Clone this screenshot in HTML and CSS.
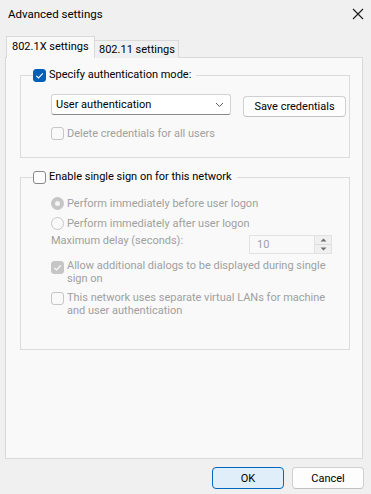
FILE: index.html
```html
<!DOCTYPE html>
<html>
<head>
<meta charset="utf-8">
<link rel="stylesheet" href="styles.css">
</head>
<body>
<div class="window">
  <div class="titlebar">
    <span class="title">Advanced settings</span>
    <svg class="close" width="12" height="12" viewBox="0 0 12 12"><path d="M1 1 L11 11 M11 1 L1 11" stroke="#1a1a1a" stroke-width="1.1" fill="none"/></svg>
  </div>
  <div class="tabs">
    <div class="tab active">802.1X settings</div>
    <div class="tab">802.11 settings</div>
  </div>
  <div class="panel">
    <fieldset class="group g1">
      <legend><span class="cb checked"><svg width="13" height="13" viewBox="0 0 13 13"><path d="M3.3 6.8 L5.5 9 L9.8 4.4" stroke="#fff" stroke-width="1.1" fill="none"/></svg></span><span>Specify authentication mode:</span></legend>
      <div class="auth-row">
        <div class="select"><span>User authentication</span><svg class="chev" width="9" height="6" viewBox="0 0 9 6"><path d="M1 1 L4.5 4.5 L8 1" stroke="#5c5c5c" stroke-width="1" fill="none"/></svg></div>
        <div class="btn save">Save credentials</div>
      </div>
      <div class="opt disabled del"><span class="cb dis"></span><span>Delete credentials for all users</span></div>
    </fieldset>
    <fieldset class="group g2">
      <legend><span class="cb"></span><span>Enable single sign on for this network</span></legend>
      <div class="opt disabled radio-row first"><span class="radio on"></span><span>Perform immediately before user logon</span></div>
      <div class="opt disabled radio-row"><span class="radio"></span><span>Perform immediately after user logon</span></div>
      <div class="delay-row disabled">
        <span class="delay-label">Maximum delay (seconds):</span>
        <div class="spin">
          <span class="spin-val">10</span>
          <div class="spin-btns">
            <div class="spin-up"><svg width="7" height="4" viewBox="0 0 7 4"><path d="M0.5 3.5 L3.5 0.5 L6.5 3.5 Z" fill="#6e6e6e"/></svg></div>
            <div class="spin-down"><svg width="7" height="4" viewBox="0 0 7 4"><path d="M0.5 0.5 L3.5 3.5 L6.5 0.5 Z" fill="#6e6e6e"/></svg></div>
          </div>
        </div>
      </div>
      <div class="multi disabled m1"><span class="cb dis checked-dis"><svg width="13" height="13" viewBox="0 0 13 13"><path d="M3.3 6.8 L5.5 9 L9.8 4.4" stroke="#fff" stroke-width="1.1" fill="none"/></svg></span><span class="mtext">Allow additional dialogs to be displayed during single sign on</span></div>
      <div class="multi disabled m2"><span class="cb dis"></span><span class="mtext">This network uses separate virtual LANs for machine and user authentication</span></div>
    </fieldset>
  </div>
  <div class="footer">
    <div class="btn primary">OK</div>
    <div class="btn">Cancel</div>
  </div>
</div>
</body>
</html>
```
FILE: styles.css
```css
* { box-sizing: border-box; }
html, body { margin: 0; padding: 0; }
body {
  width: 371px;
  height: 494px;
  background: #f0f0f0;
  font-family: Roboto, "Segoe UI", sans-serif;
  font-size: 11px;
  color: #000;
  overflow: hidden;
}
.window { width: 371px; height: 494px; display: flex; flex-direction: column; }
.titlebar {
  height: 30px;
  display: flex;
  align-items: center;
  padding: 0 8px 2px 8px;
  justify-content: space-between;
}
.title { font-size: 11.5px; color: #000; }
.close { margin-right: -1px; }
.tabs {
  display: flex;
  align-items: flex-end;
  margin: 6px 0 -1px 6px;
  position: relative;
  z-index: 1;
}
.tab {
  height: 18px;
  width: 84px;
  border: 1px solid #d9d9d9;
  border-left: none;
  border-bottom: none;
  background: #f0f0f0;
  padding-left: 4px;
  line-height: 17px;
  white-space: nowrap;
}
.tab.active {
  height: 22px;
  width: 89px;
  border-left: 1px solid #d9d9d9;
  background: #f9f9f9;
  padding-left: 5px;
  line-height: 19px;
}
.panel {
  margin-left: 5px;
  width: 358px;
  height: 402px;
  background: #f9f9f9;
  border: 1px solid #d9d9d9;
  padding: 9px 12px 0 14px;
}
.group {
  margin: 0;
  padding: 0 0 16px 0;
  border: 1px solid #dcdcdc;
  min-width: 0;
}
.group legend {
  margin-left: 12px;
  padding: 0 5px 0 0;
  height: 16px;
  line-height: 16px;
  display: flex;
  align-items: center;
  gap: 3px;
  font-size: 11px;
}
.g2 { margin-top: 11px; padding-bottom: 32px; }
.cb {
  width: 13px;
  height: 13px;
  border: 1px solid #878787;
  border-radius: 3px;
  background: #fdfdfd;
  flex: none;
  display: inline-block;
  position: relative;
}
.cb svg { display: block; margin: -1px; }
.cb.checked { background: #005fb8; border-color: #005fb8; }
.cb.dis { border-color: #c6c6c6; background: #f9f9f9; }
.cb.checked-dis { background: #c6c6c6; border-color: #c6c6c6; }
.auth-row {
  display: flex;
  align-items: flex-start;
  margin: 11px 0 0 30px;
}
.select {
  width: 180px;
  height: 21px;
  background: #ffffff;
  border: 1px solid #d3d3d3;
  border-bottom-color: #8a8a8a;
  border-radius: 3px;
  display: flex;
  align-items: center;
  justify-content: space-between;
  padding: 0 6px 0 4px;
}
.select span { line-height: 18px; }
.chev { margin-top: 1px; }
.btn {
  height: 21px;
  background: #fdfdfd;
  border: 1px solid #d0d0d0;
  border-bottom-color: #c2c2c2;
  border-radius: 4px;
  display: flex;
  align-items: center;
  justify-content: center;
  white-space: nowrap;
}
.btn.save { width: 103px; margin: 2px 0 0 12px; }
.disabled { color: #a0a0a0; }
.opt {
  display: flex;
  align-items: center;
  gap: 3px;
  height: 16px;
  margin-left: 30px;
}
.del { margin-top: 8px; }
.radio-row { height: 20px; }
.radio-row.first { margin-top: 8px; }
.radio {
  width: 13px;
  height: 13px;
  border-radius: 50%;
  border: 1px solid #c6c6c6;
  background: #f9f9f9;
  flex: none;
}
.radio.on {
  border: 4px solid #c6c6c6;
  background: #f4f4f4;
}
.delay-row {
  display: flex;
  align-items: flex-start;
  margin-left: 30px;
  height: 21px;
}
.delay-label { width: 198px; line-height: 16px; }
.spin {
  margin-top: 2px;
  width: 83px;
  height: 19px;
  border: 1px solid #e2e2e2;
  background: #f9f9f9;
  display: flex;
  justify-content: space-between;
}
.spin-val { padding-left: 7px; line-height: 17px; }
.spin-btns {
  width: 17px;
  display: flex;
  flex-direction: column;
  border-left: 1px solid #e2e2e2;
}
.spin-up, .spin-down {
  flex: 1;
  display: flex;
  align-items: center;
  justify-content: center;
  background: #f0f0f0;
}
.spin-up { border-bottom: 1px solid #dcdcdc; }
.multi {
  display: flex;
  align-items: flex-start;
  gap: 3px;
  margin-left: 30px;
}
.multi .cb { margin-top: 2px; }
.m1 { margin-top: 5px; }
.m2 { margin-top: 6px; }
.m2 .cb { margin-top: 1px; }
.mtext { line-height: 13px; width: 264px; }
.footer {
  display: flex;
  justify-content: flex-end;
  gap: 8px;
  padding: 8px 7px 0 0;
}
.footer .btn { width: 72px; height: 22px; }
.btn.primary {
  background: #e0eef9;
  border: 1px solid #0067c0;
}
```
